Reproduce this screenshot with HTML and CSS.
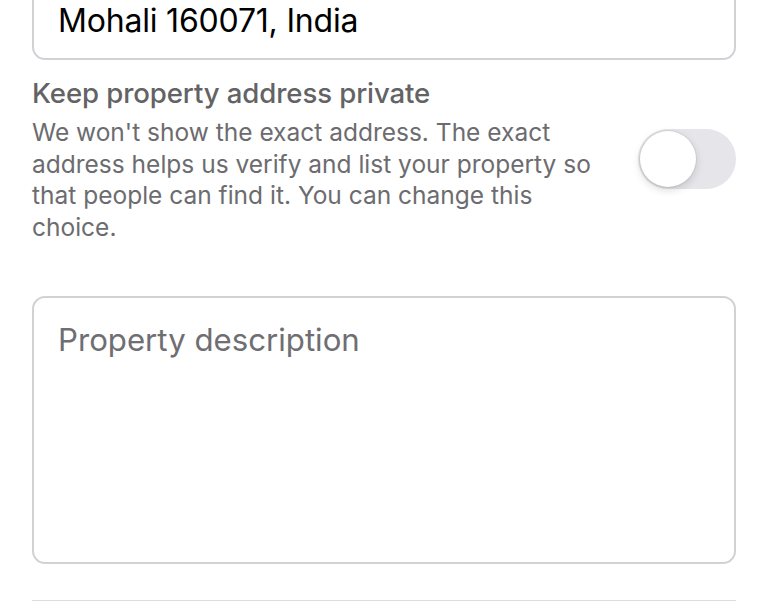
FILE: index.html
```html
<!DOCTYPE html>
<html>
<head>
<meta charset="utf-8">
<link rel="stylesheet" href="styles.css">
</head>
<body>
<div class="page">
  <div class="field field-address">
    <span class="value">Mohali 160071, India</span>
  </div>
  <div class="privacy">
    <div class="privacy-text">
      <div class="privacy-title">Keep property address private</div>
      <div class="privacy-desc">We won't show the exact address. The exact address helps us verify and list your property so that people can find it. You can change this choice.</div>
    </div>
    <div class="toggle"><div class="knob"></div></div>
  </div>
  <div class="field field-desc">
    <span class="placeholder">Property description</span>
  </div>
  <div class="divider"></div>
</div>
</body>
</html>
```
FILE: styles.css
```css
html, body {
  margin: 0;
  padding: 0;
  background: #ffffff;
}
body {
  font-family: Inter, "Noto Sans", sans-serif;
  -webkit-font-smoothing: antialiased;
}
.page {
  padding: 0 32px;
  display: flex;
  flex-direction: column;
  height: 601px;
  overflow: hidden;
}
.field {
  border: 2px solid #d1d1d6;
  border-radius: 13px;
  box-sizing: border-box;
  flex-shrink: 0;
}
.field-address {
  margin-top: -40px;
  height: 100px;
  padding: 40px 0 0 24px;
}
.value {
  font-size: 32px;
  line-height: 38px;
  color: #000;
  letter-spacing: -0.2px;
}
.privacy {
  display: flex;
  align-items: flex-start;
  justify-content: space-between;
  margin-top: 16px;
}
.privacy-text {
  width: 575px;
}
.privacy-title {
  font-size: 27.6px;
  line-height: 34px;
  font-weight: 500;
  color: #636366;
  letter-spacing: -0.1px;
}
.privacy-desc {
  margin-top: 7px;
  font-size: 24.5px;
  line-height: 31.5px;
  color: #6c6c70;
}
.toggle {
  width: 98px;
  height: 60px;
  border-radius: 30px;
  background: #e5e5ea;
  margin-top: 53px;
  position: relative;
  flex-shrink: 0;
}
.knob {
  position: absolute;
  left: 2px;
  top: 2px;
  width: 56px;
  height: 56px;
  border-radius: 50%;
  background: #fff;
  box-shadow: 0 3px 8px rgba(0,0,0,0.15), 0 0 0 1px rgba(0,0,0,0.06);
}
.field-desc {
  margin-top: 53px;
  height: 268px;
  padding: 22px 0 0 24px;
}
.placeholder {
  font-size: 31.2px;
  line-height: 40px;
  color: #6e6e73;
}
.divider {
  margin-top: 36px;
  height: 2px;
  flex-shrink: 0;
  background: #dcdce0;
}
```
